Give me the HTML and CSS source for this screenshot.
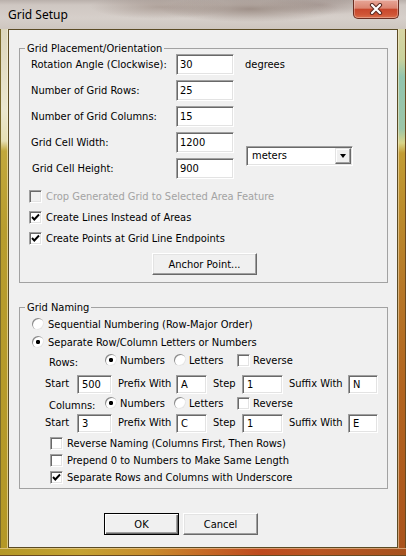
FILE: index.html
```html
<!DOCTYPE html>
<html>
<head>
<meta charset="utf-8">
<title>Grid Setup</title>
<link rel="stylesheet" href="styles.css">
</head>
<body>
<div class="window">
  <div class="titlebar">
    <span class="title">Grid Setup</span>
    <div class="close">
      <svg width="16" height="12" viewBox="0 0 16 12">
        <path d="M4 2 L12 10 M12 2 L4 10" stroke="#5a2a22" stroke-width="4.2" stroke-linecap="round"/>
        <path d="M4 2 L12 10 M12 2 L4 10" stroke="#ffffff" stroke-width="2.2" stroke-linecap="round"/>
      </svg>
    </div>
  </div>
  <div class="middle">
    <div class="frame-left"></div>
    <div class="client">
      <fieldset class="group g1">
        <legend>Grid Placement/Orientation</legend>
        <div class="fields">
          <span class="flabel">Rotation Angle (Clockwise):</span><div class="input finput">30</div>
          <span class="unit">degrees</span>
          <span class="flabel">Number of Grid Rows:</span><div class="input finput">25</div>
          <span class="flabel">Number of Grid Columns:</span><div class="input finput">15</div>
          <span class="flabel">Grid Cell Width:</span><div class="input finput">1200</div>
          <span class="flabel shift">Grid Cell Height:</span><div class="input finput">900</div>
          <div class="select"><span class="select-text">meters</span><span class="drop"><span class="tri"></span></span></div>
        </div>
        <div class="checks">
          <div class="crow disabled"><span class="check off"></span>Crop Generated Grid to Selected Area Feature</div>
          <div class="crow"><span class="check"><svg width="9" height="9" viewBox="0 0 9 9"><path d="M1 4 L3.3 6.5 L8 1.5" stroke="#000" stroke-width="1.9" fill="none"/></svg></span>Create Lines Instead of Areas</div>
          <div class="crow"><span class="check"><svg width="9" height="9" viewBox="0 0 9 9"><path d="M1 4 L3.3 6.5 L8 1.5" stroke="#000" stroke-width="1.9" fill="none"/></svg></span>Create Points at Grid Line Endpoints</div>
        </div>
        <div class="btn anchor">Anchor Point...</div>
      </fieldset>

      <fieldset class="group g2">
        <legend>Grid Naming</legend>
        <div class="opt first"><span class="radio"></span>Sequential Numbering (Row-Major Order)</div>
        <div class="opt"><span class="radio on"></span>Separate Row/Column Letters or Numbers</div>
        <div class="axis">
          <span class="axis-label">Rows:</span>
          <span class="choice c-num"><span class="radio on"></span>Numbers</span>
          <span class="choice c-let"><span class="radio"></span>Letters</span>
          <span class="choice"><span class="check"></span>Reverse</span>
        </div>
        <div class="startrow">
          <span class="sl s-start">Start</span><div class="input i-start">500</div>
          <span class="sl s-prefix">Prefix With</span><div class="input i-prefix">A</div>
          <span class="sl s-step">Step</span><div class="input i-step">1</div>
          <span class="sl s-suffix">Suffix With</span><div class="input i-suffix">N</div>
        </div>
        <div class="axis">
          <span class="axis-label">Columns:</span>
          <span class="choice c-num"><span class="radio on"></span>Numbers</span>
          <span class="choice c-let"><span class="radio"></span>Letters</span>
          <span class="choice"><span class="check"></span>Reverse</span>
        </div>
        <div class="startrow second">
          <span class="sl s-start">Start</span><div class="input i-start">3</div>
          <span class="sl s-prefix">Prefix With</span><div class="input i-prefix">C</div>
          <span class="sl s-step">Step</span><div class="input i-step">1</div>
          <span class="sl s-suffix">Suffix With</span><div class="input i-suffix">E</div>
        </div>
        <div class="nchecks">
          <div class="nrow"><span class="check"></span>Reverse Naming (Columns First, Then Rows)</div>
          <div class="nrow"><span class="check"></span>Prepend 0 to Numbers to Make Same Length</div>
          <div class="nrow"><span class="check"><svg width="9" height="9" viewBox="0 0 9 9"><path d="M1 4 L3.3 6.5 L8 1.5" stroke="#000" stroke-width="1.9" fill="none"/></svg></span>Separate Rows and Columns with Underscore</div>
        </div>
      </fieldset>

      <div class="buttons">
        <div class="btn default">OK</div>
        <div class="btn">Cancel</div>
      </div>
    </div>
    <div class="frame-right"></div>
  </div>
  <div class="frame-bottom"></div>
</div>
</body>
</html>
```
FILE: styles.css
```css
html, body {
  margin: 0;
  padding: 0;
}
body {
  font-family: "DejaVu Sans Condensed", "DejaVu Sans", sans-serif;
  font-size: 11px;
  color: #000;
  background: #b89c2c;
}
.window {
  width: 406px;
  height: 556px;
  display: flex;
  flex-direction: column;
  overflow: hidden;
}

/* Title bar */
.titlebar {
  height: 29px;
  flex: none;
  display: flex;
  align-items: flex-start;
  background:
    radial-gradient(ellipse 90px 13px at 250px 9px, rgba(118, 98, 88, 0.55), rgba(118, 98, 88, 0)),
    radial-gradient(ellipse 70px 12px at 160px 7px, rgba(135, 115, 105, 0.45), rgba(135, 115, 105, 0)),
    radial-gradient(ellipse 60px 10px at 320px 5px, rgba(120, 100, 95, 0.4), rgba(120, 100, 95, 0)),
    linear-gradient(180deg, #b9b0ab 0, #cfc7c2 5px, #d6cfca 18px, #cec6bf 29px);
}
.title {
  font-family: "Noto Sans", "Open Sans", sans-serif;
  font-size: 12px;
  line-height: 16px;
  margin: 7px 0 0 8px;
  color: #000;
}
.close {
  margin-left: auto;
  margin-right: 7px;
  width: 46px;
  height: 19px;
  box-sizing: border-box;
  border: 1px solid #6a2e22;
  border-top: none;
  border-radius: 0 0 5px 5px;
  background: linear-gradient(180deg, #e7a697 0%, #db8571 45%, #c8472c 52%, #cf5536 80%, #d8704c 100%);
  box-shadow: inset 0 0 0 1px rgba(255, 255, 255, 0.3);
  display: flex;
  align-items: center;
  justify-content: center;
}

/* Frame */
.middle {
  height: 519px;
  flex: none;
  display: flex;
}
.frame-left {
  width: 8px;
  flex: none;
  background: linear-gradient(180deg, #dcd6bc 0, #ebe7d0 80px, #e6dfb4 112px, #c2a83c 122px, #b89d2e 200px, #b49826 519px);
  box-shadow: inset 1px 0 0 #7a6a2a, inset -1px 0 0 rgba(255, 250, 220, 0.5);
}
.frame-right {
  width: 8px;
  flex: none;
  background: linear-gradient(180deg, #d7d4a4 0, #c9d29c 30px, #92c5ae 48px, #9cc6a8 100px, #d8d488 114px, #c29c34 124px, #bb8c2c 180px, #b67728 260px, #b2641f 360px, #aa531c 519px);
  box-shadow: inset -1px 0 0 #6a4a20, inset 1px 0 0 rgba(255, 240, 210, 0.5);
}
.frame-bottom {
  height: 8px;
  flex: none;
  background: linear-gradient(90deg, #b49826 0, #c4a232 80px, #c88c2c 150px, #c66c26 200px, #be4a1e 260px, #b85622 320px, #a6521e 406px);
  box-shadow: inset 0 1px 0 rgba(255, 235, 200, 0.5), inset 0 -1px 0 #6a4a20;
}

/* Client area */
.client {
  width: 390px;
  flex: none;
  box-sizing: border-box;
  border: 1px solid #5b4b24;
  background: #f0f0f0;
  padding: 0 9px 0 10px;
}

/* Group boxes */
.group {
  margin: 0;
  padding: 0;
  min-width: 0;
  border: 1px solid #a2a2a2;
}
.group legend {
  padding: 0 2px;
  margin-left: 5px;
  line-height: 13px;
}
.g1 {
  margin-top: 12px;
  padding-bottom: 7px;
}
.g2 {
  margin-top: 18px;
  padding-bottom: 2px;
}

/* Sunken inputs */
.input {
  box-sizing: border-box;
  background: #fff;
  border: 1px solid;
  border-color: #a0a0a0 #ffffff #ffffff #a0a0a0;
  box-shadow: inset 1px 1px 0 #696969, inset -1px -1px 0 #e3e3e3;
  padding: 0 3px;
  white-space: nowrap;
}

/* Placement grid */
.fields {
  margin: -1px 0 0 11px;
  display: grid;
  grid-template-columns: 145px 58px 11px auto;
  grid-auto-rows: 21px;
  row-gap: 5px;
  align-items: center;
}
.flabel {
  grid-column: 1;
  white-space: nowrap;
}
.flabel.shift {
  padding-left: 1px;
}
.finput {
  grid-column: 2;
  height: 21px;
  line-height: 19px;
}
.unit {
  grid-column: 4;
  grid-row: 1;
}
.select {
  grid-column: 4;
  grid-row: 4 / 6;
  margin-left: 1px;
  width: 107px;
  height: 20px;
  box-sizing: border-box;
  background: #fff;
  border: 1px solid;
  border-color: #a0a0a0 #ffffff #ffffff #a0a0a0;
  box-shadow: inset 1px 1px 0 #696969, inset -1px -1px 0 #e3e3e3;
  display: flex;
  align-items: center;
  padding: 1px 1px 1px 5px;
}
.select-text {
  flex: 1;
}
.drop {
  width: 16px;
  height: 16px;
  box-sizing: border-box;
  background: #f0f0f0;
  border: 1px solid;
  border-color: #e3e3e3 #696969 #696969 #e3e3e3;
  box-shadow: inset -1px -1px 0 #a0a0a0, inset 1px 1px 0 #ffffff;
  display: flex;
  align-items: center;
  justify-content: center;
}
.tri {
  width: 0;
  height: 0;
  border-left: 3.5px solid transparent;
  border-right: 3.5px solid transparent;
  border-top: 4px solid #000;
  margin-top: 1px;
}

/* Checkboxes */
.check {
  width: 13px;
  height: 13px;
  flex: none;
  box-sizing: border-box;
  background: #fff;
  border: 1px solid;
  border-color: #a0a0a0 #ffffff #ffffff #a0a0a0;
  box-shadow: inset 1px 1px 0 #696969, inset -1px -1px 0 #e3e3e3;
  display: flex;
  align-items: center;
  justify-content: center;
}
.check.off {
  background: #f0f0f0;
}
.checks {
  margin: 7px 0 0 9px;
}
.crow {
  height: 21px;
  display: flex;
  align-items: center;
  gap: 4px;
  white-space: nowrap;
}
.crow.disabled {
  color: #a3a3a3;
}

/* Buttons */
.btn {
  box-sizing: border-box;
  height: 22px;
  background: #f0f0f0;
  border: 1px solid;
  border-color: #ffffff #696969 #696969 #ffffff;
  box-shadow: inset -1px -1px 0 #a0a0a0, inset 1px 1px 0 #e3e3e3;
  display: flex;
  align-items: center;
  justify-content: center;
  white-space: nowrap;
}
.anchor {
  width: 105px;
  margin: 4px 0 0 132px;
}
.buttons {
  display: flex;
  gap: 4px;
  margin: 24px 0 0 85px;
}
.buttons .btn {
  width: 75px;
}
.btn.default {
  border: 1px solid #000;
  box-shadow: inset 1px 1px 0 #ffffff, inset -1px -1px 0 #696969, inset -2px -2px 0 #a0a0a0;
}

/* Radios */
.radio {
  width: 12px;
  height: 12px;
  flex: none;
  border-radius: 50%;
  background: #fff;
  box-shadow: inset 1px 1px 0 #8a8a8a, inset -1px -1px 0 #e6e6e6;
}
.radio.on {
  background: radial-gradient(circle at 50% 50%, #000 0, #000 1.9px, #fff 2.4px);
}

/* Grid naming */
.opt {
  height: 18px;
  display: flex;
  align-items: center;
  gap: 4px;
  margin-left: 12px;
  white-space: nowrap;
}
.opt.first {
  margin-top: 1px;
}
.axis {
  height: 18px;
  display: flex;
  align-items: center;
  margin-left: 29px;
  white-space: nowrap;
}
.axis-label {
  width: 56px;
  flex: none;
  padding-top: 4px;
}
.choice {
  display: flex;
  align-items: center;
  gap: 3px;
}
.c-num {
  width: 69px;
}
.c-let {
  width: 63px;
}
.startrow {
  height: 19px;
  margin: 6px 0 0 25px;
  display: flex;
  align-items: center;
  white-space: nowrap;
}
.startrow.second {
  margin-top: 2px;
}
.startrow .input {
  height: 19px;
  line-height: 17px;
  padding-left: 4px;
}
.sl {
  flex: none;
  margin-bottom: 3px;
}
.s-start { width: 32px; }
.s-prefix { width: 58px; margin-left: 6px; }
.s-step { width: 29px; margin-left: 6px; }
.s-suffix { width: 59px; margin-left: 6px; }
.i-start { width: 35px; }
.i-prefix { width: 31px; }
.i-step { width: 41px; }
.i-suffix { width: 30px; }
.nchecks {
  margin: 2px 0 0 30px;
}
.nrow {
  height: 17px;
  display: flex;
  align-items: center;
  gap: 4px;
  white-space: nowrap;
}
```
